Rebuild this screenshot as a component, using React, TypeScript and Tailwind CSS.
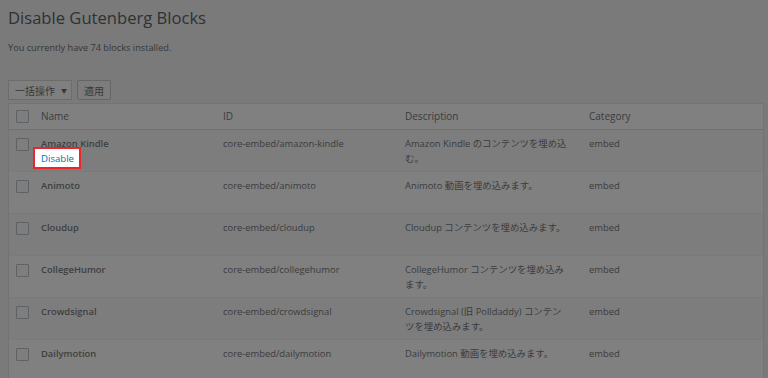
import React from "react";

type Row = { name: string; id: string; desc: string[]; striped: boolean };

const rows: Row[] = [
  { name: "Amazon Kindle", id: "core-embed/amazon-kindle", desc: ["Amazon Kindle のコンテンツを埋め込", "む。"], striped: true },
  { name: "Animoto", id: "core-embed/animoto", desc: ["Animoto 動画を埋め込みます。"], striped: false },
  { name: "Cloudup", id: "core-embed/cloudup", desc: ["Cloudup コンテンツを埋め込みます。"], striped: true },
  { name: "CollegeHumor", id: "core-embed/collegehumor", desc: ["CollegeHumor コンテンツを埋め込み", "ます。"], striped: false },
  { name: "Crowdsignal", id: "core-embed/crowdsignal", desc: ["Crowdsignal (旧 Polldaddy) コンテン", "ツを埋め込みます。"], striped: true },
  { name: "Dailymotion", id: "core-embed/dailymotion", desc: ["Dailymotion 動画を埋め込みます。"], striped: false },
];

function Box() {
  return <div className="w-[13px] h-[13px] border border-[#5f6265] bg-[#7e7e7e] rounded-[1px]" />;
}

export default function App() {
  return (
    <div
      className="w-[768px] h-[378px] overflow-hidden bg-[#7a7a7a] text-[#383a3c]"
      style={{ fontFamily: '"Open Sans", "Noto Sans CJK JP", sans-serif' }}
    >
      <div className="pl-[8px] pt-[6px]">
        <h1 className="text-[16.6px] leading-[24px] text-[#2e3133] font-normal">Disable Gutenberg Blocks</h1>
        <p className="mt-[11px] text-[9.2px] leading-[14px] text-[#35383a]">You currently have 74 blocks installed.</p>
        <div className="mt-[25px] flex gap-[5px] items-center">
          <div className="h-[20px] w-[64px] border border-[#6c6c6c] bg-[#7f7f7f] flex items-center pl-[6px] text-[10px] text-[#35383a]" style={{ fontFamily: '"Noto Sans CJK JP", sans-serif' }}>
            <span>一括操作</span>
            <span className="ml-[6px] text-[6px]">▼</span>
          </div>
          <div className="h-[20px] w-[34px] border border-[#656565] bg-[#7c7c7c] rounded-[2px] flex items-center justify-center text-[10px] text-[#35383a]" style={{ fontFamily: '"Noto Sans CJK JP", sans-serif' }}>
            適用
          </div>
        </div>
        <div className="mt-[3px] w-[756px] border border-[#737373] bg-[#808080] text-[9.4px]">
          <div className="grid grid-cols-[24px_182px_182px_184px_182px] h-[26px] items-center border-b border-[#707070] text-[10px] text-[#3a3c3e]">
            <div className="pl-[7px]"><Box /></div>
            <div className="pl-[8px]">Name</div>
            <div className="pl-[8px]">ID</div>
            <div className="pl-[8px]">Description</div>
            <div className="pl-[8px]">Category</div>
          </div>
          {rows.map((r, i) => (
            <div
              key={r.name}
              className={`grid grid-cols-[24px_182px_182px_184px_182px] h-[42px] items-start pt-[6px] ${r.striped ? "bg-[#7d7d7d]" : "bg-[#808080]"} ${i < rows.length - 1 ? "border-b border-[#7a7a7a]" : ""}`}
            >
              <div className="pl-[7px] pt-[2px]"><Box /></div>
              <div className="pl-[8px] relative leading-[15px]">
                <span className="font-semibold text-[#3d3f41]">{r.name}</span>
                {i === 0 && (
                  <div className="absolute left-0 top-[11px] w-[48px] h-[22px] border-2 border-[#e8262b] bg-white flex items-center pl-[6px]">
                    <span className="text-[#0073aa] text-[9.6px]">Disable</span>
                  </div>
                )}
              </div>
              <div className="pl-[8px] leading-[15px] text-[#3a3c3e]">{r.id}</div>
              <div className="pl-[8px] leading-[15px] text-[#3a3c3e]">
                {r.desc.map((d) => (
                  <div key={d} className="whitespace-nowrap">{d}</div>
                ))}
              </div>
              <div className="pl-[8px] leading-[15px] text-[#3a3c3e]">embed</div>
            </div>
          ))}
        </div>
      </div>
    </div>
  );
}
